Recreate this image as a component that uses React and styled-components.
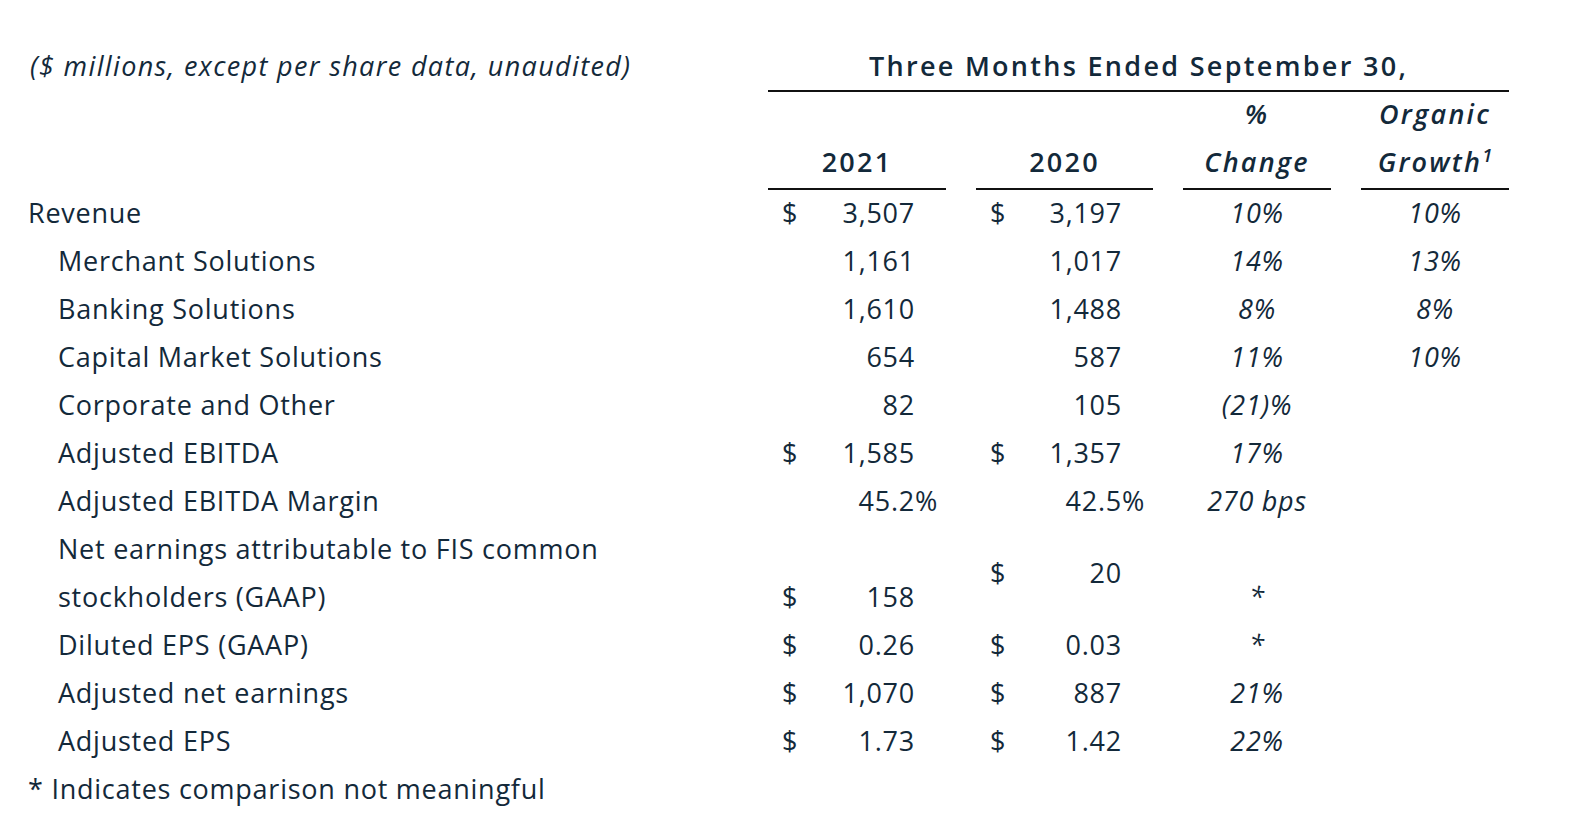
import React from 'react'
import styled, { createGlobalStyle, css } from 'styled-components'

const GlobalStyle = createGlobalStyle`
  html, body {
    margin: 0;
    padding: 0;
    background: #fff;
  }
  body {
    font-family: "Open Sans", "Noto Sans", sans-serif;
    color: #13293a;
  }
`

// data text sits a touch above the middle of its 48px row
const lift = css`
  margin: -1px 0 1px;
`

const Page = styled.div`
  padding: 42px 0 0 28px;
  width: 1586px;
  box-sizing: border-box;
`

const Table = styled.div`
  display: grid;
  grid-template-columns: 710px 178px 177px 148px 148px;
  column-gap: 30px;
  font-size: 27px;
  line-height: 48px;
  letter-spacing: 0.75px;
`

const Subtitle = styled.div`
  font-style: italic;
  letter-spacing: 1.35px;
  padding-left: 2px;
  grid-column: 1;
`

const Title = styled.div`
  grid-column: 2 / 6;
  text-align: center;
  font-weight: 600;
  letter-spacing: 2.3px;
  border-bottom: 2px solid #111;
`

const ColHead = styled.div`
  grid-column: ${(p) => p.col};
  margin-top: -2px;
  padding-bottom: 2px;
  text-align: center;
  font-weight: 600;
  letter-spacing: 2.2px;
  font-style: ${(p) => (p.italic ? 'italic' : 'normal')};
  border-bottom: 2px solid #111;
  display: flex;
  flex-direction: column;
  justify-content: flex-end;
`

const Sup = styled.sup`
  font-size: 0.68em;
  line-height: 0;
  letter-spacing: 0;
`

const Label = styled.div`
  ${lift};
  grid-column: 1;
  padding-left: ${(p) => (p.indent ? '30px' : '0')};
`

const Money = styled.div`
  ${lift};
  display: flex;
  align-items: ${(p) => p.align || 'center'};
  padding: 0 4px 0 14px;
`

const Dollar = styled.span`
  width: 20px;
`

const Num = styled.span`
  margin-left: auto;
`

const Suffix = styled.span`
  width: 27px;
`

const Pct = styled.div`
  ${lift};
  font-style: italic;
  display: flex;
  justify-content: center;
  align-items: ${(p) => p.align || 'center'};
`

const Footnote = styled.div`
  ${lift};
  grid-column: 1 / 6;
`

const rows = [
  { label: 'Revenue', a: ['$', '3,507'], b: ['$', '3,197'], c: '10%', d: '10%' },
  { label: 'Merchant Solutions', indent: true, a: ['', '1,161'], b: ['', '1,017'], c: '14%', d: '13%' },
  { label: 'Banking Solutions', indent: true, a: ['', '1,610'], b: ['', '1,488'], c: '8%', d: '8%' },
  { label: 'Capital Market Solutions', indent: true, a: ['', '654'], b: ['', '587'], c: '11%', d: '10%' },
  { label: 'Corporate and Other', indent: true, a: ['', '82'], b: ['', '105'], c: '(21)%', d: '' },
  { label: 'Adjusted EBITDA', indent: true, a: ['$', '1,585'], b: ['$', '1,357'], c: '17%', d: '' },
  { label: 'Adjusted EBITDA Margin', indent: true, a: ['', '45.2', '%'], b: ['', '42.5', '%'], c: '270 bps', d: '' },
  {
    label: (
      <>
        Net earnings attributable to FIS common
        <br />
        stockholders (GAAP)
      </>
    ),
    indent: true,
    a: ['$', '158'],
    aAlign: 'flex-end',
    b: ['$', '20'],
    c: '*',
    cAlign: 'flex-end',
    d: '',
  },
  { label: 'Diluted EPS (GAAP)', indent: true, a: ['$', '0.26'], b: ['$', '0.03'], c: '*', d: '' },
  { label: 'Adjusted net earnings', indent: true, a: ['$', '1,070'], b: ['$', '887'], c: '21%', d: '' },
  { label: 'Adjusted EPS', indent: true, a: ['$', '1.73'], b: ['$', '1.42'], c: '22%', d: '' },
]

const MoneyCell = ({ v, align }) => (
  <Money align={align}>
    <Dollar>{v[0]}</Dollar>
    <Num>{v[1]}</Num>
    <Suffix>{v[2] || ''}</Suffix>
  </Money>
)

export default function App() {
  return (
    <Page>
      <GlobalStyle />
      <Table>
        <Subtitle>($ millions, except per share data, unaudited)</Subtitle>
        <Title>Three Months Ended September 30,</Title>

        <ColHead col={2}>2021</ColHead>
        <ColHead col={3}>2020</ColHead>
        <ColHead col={4} italic>
          <span>%</span>
          <span>Change</span>
        </ColHead>
        <ColHead col={5} italic>
          <span>Organic</span>
          <span>
            Growth<Sup>1</Sup>
          </span>
        </ColHead>

        {rows.map((r, i) => (
          <React.Fragment key={i}>
            <Label indent={r.indent}>{r.label}</Label>
            <MoneyCell v={r.a} align={r.aAlign} />
            <MoneyCell v={r.b} />
            <Pct align={r.cAlign}>{r.c}</Pct>
            <Pct>{r.d}</Pct>
          </React.Fragment>
        ))}

        <Footnote>* Indicates comparison not meaningful</Footnote>
      </Table>
    </Page>
  )
}
